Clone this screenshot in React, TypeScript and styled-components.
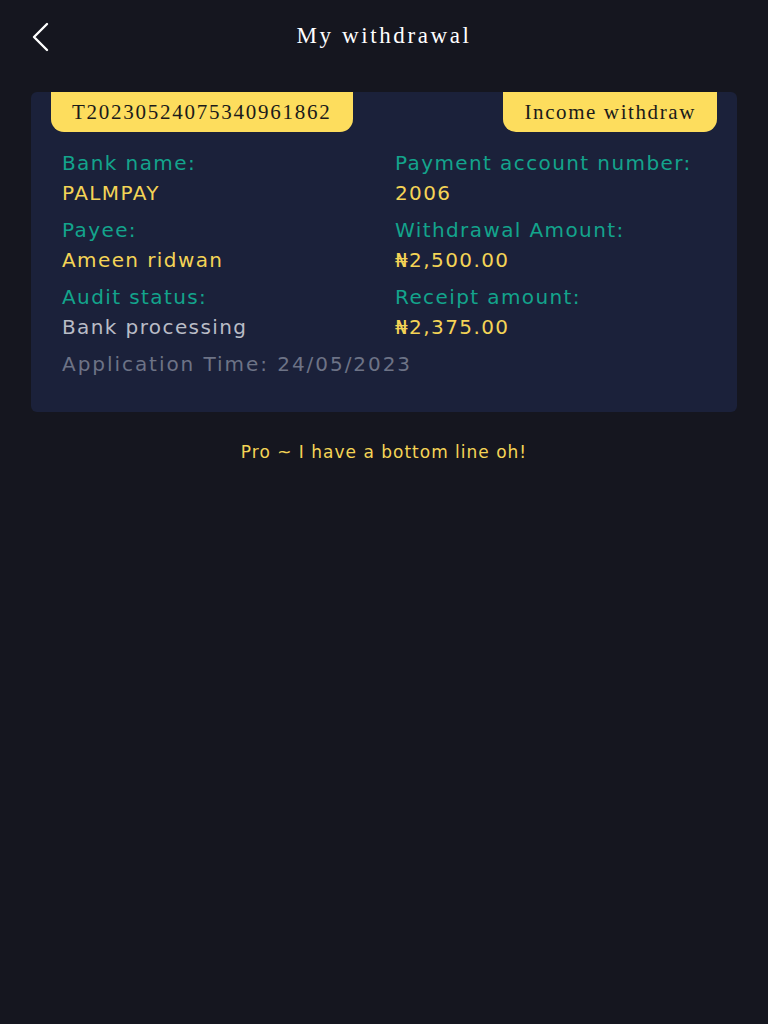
import styled, { createGlobalStyle } from "styled-components";

const GlobalStyle = createGlobalStyle`
  html, body {
    margin: 0;
    padding: 0;
    background: #15161f;
  }
  #root {
    min-height: 1024px;
    background: #15161f;
  }
`;

const Page = styled.div`
  width: 768px;
  min-height: 1024px;
  background: #15161f;
  font-family: "DejaVu Sans", "Liberation Sans", sans-serif;
`;

const Header = styled.div`
  position: relative;
  height: 72px;
  display: flex;
  align-items: center;
  justify-content: center;
`;

const BackBtn = styled.div`
  position: absolute;
  left: 30px;
  top: 22px;
  width: 22px;
  height: 30px;
  display: flex;
  align-items: center;
`;

const Title = styled.div`
  font-family: "Liberation Serif", "Times New Roman", serif;
  font-size: 23px;
  letter-spacing: 2.6px;
  color: #ffffff;
`;

const Card = styled.div`
  margin: 20px 31px 0;
  background: #1b213a;
  border-radius: 6px;
  padding: 0 0 33px;
`;

const TagRow = styled.div`
  display: flex;
  justify-content: space-between;
  padding: 0 20px;
`;

const Tag = styled.div<{ $spacing: number }>`
  height: 40px;
  display: flex;
  align-items: center;
  padding: 0 21px;
  background: #fddd5d;
  border-radius: 0 0 13px 13px;
  font-family: "Liberation Serif", "Times New Roman", serif;
  font-size: 21px;
  letter-spacing: ${(p) => p.$spacing}px;
  color: #1a1a1a;
`;

const Fields = styled.div`
  display: grid;
  grid-template-columns: 333px 1fr;
  row-gap: 7px;
  padding: 16px 0 0 31px;
`;

const Field = styled.div``;

const Label = styled.div`
  font-size: 20px;
  line-height: 30px;
  letter-spacing: 1.4px;
  color: #13a48c;
`;

const Value = styled.div<{ $tone?: "gold" | "gray" }>`
  font-size: 20px;
  line-height: 30px;
  letter-spacing: 1.4px;
  color: ${(p) => (p.$tone === "gray" ? "#b9bcc6" : "#f4d456")};
`;

const AppTime = styled.div`
  grid-column: 1 / 3;
  font-size: 20px;
  line-height: 30px;
  letter-spacing: 1.95px;
  color: #6d7386;
`;

const BottomLine = styled.div`
  margin-top: 28px;
  text-align: center;
  font-size: 17px;
  line-height: 24px;
  letter-spacing: 1px;
  color: #f4d456;
`;

const BackIcon = () => (
  <svg width="20" height="30" viewBox="0 0 20 30" fill="none">
    <path d="M17 2 L4 15 L17 28" stroke="#ffffff" strokeWidth="2.4" strokeLinecap="round" strokeLinejoin="round" />
  </svg>
);

const rows: { label: string; value: string; tone?: "gold" | "gray" }[] = [
  { label: "Bank name:", value: "PALMPAY" },
  { label: "Payment account number:", value: "2006" },
  { label: "Payee:", value: "Ameen ridwan" },
  { label: "Withdrawal Amount:", value: "₦2,500.00" },
  { label: "Audit status:", value: "Bank processing", tone: "gray" },
  { label: "Receipt amount:", value: "₦2,375.00" },
];

export default function App() {
  return (
    <Page>
      <GlobalStyle />
      <Header>
        <BackBtn>
          <BackIcon />
        </BackBtn>
        <Title>My withdrawal</Title>
      </Header>
      <Card>
        <TagRow>
          <Tag $spacing={1.75}>T20230524075340961862</Tag>
          <Tag $spacing={1.6}>Income withdraw</Tag>
        </TagRow>
        <Fields>
          {rows.map((r) => (
            <Field key={r.label}>
              <Label>{r.label}</Label>
              <Value $tone={r.tone}>{r.value}</Value>
            </Field>
          ))}
          <AppTime>Application Time: 24/05/2023</AppTime>
        </Fields>
      </Card>
      <BottomLine>Pro ~ I have a bottom line oh!</BottomLine>
    </Page>
  );
}
